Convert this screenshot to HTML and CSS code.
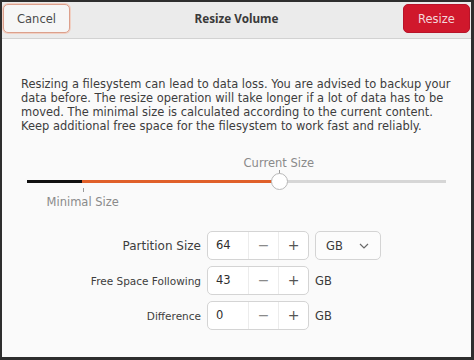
FILE: index.html
```html
<!DOCTYPE html>
<html lang="en">
<head>
<meta charset="utf-8">
<title>Resize Volume</title>
<link rel="stylesheet" href="styles.css">
</head>
<body>
<div class="window">
  <header class="headerbar">
    <button class="btn btn-cancel">Cancel</button>
    <div class="title">Resize Volume</div>
    <button class="btn btn-resize">Resize</button>
  </header>
  <main class="content">
    <p class="info">Resizing a filesystem can lead to data loss. You are advised to backup your<br>data before. The resize operation will take longer if a lot of data has to be<br>moved. The minimal size is calculated according to the current content.<br>Keep additional free space for the filesystem to work fast and reliably.</p>
    <div class="slider">
      <div class="slider-top">
        <span class="mark-label" style="left: 60.1%">Current Size</span>
      </div>
      <div class="track">
        <div class="seg seg-min" style="width: 13.2%"></div>
        <div class="seg seg-fill" style="width: 46.9%"></div>
        <div class="seg seg-rest"></div>
        <span class="tick tick-up" style="left: 60.1%"></span>
        <span class="tick tick-down" style="left: 13.3%"></span>
        <span class="knob" style="left: 60.1%"></span>
      </div>
      <div class="slider-bottom">
        <span class="mark-label" style="left: 13.3%">Minimal Size</span>
      </div>
    </div>
    <div class="form">
      <label class="lbl lbl-big">Partition Size</label>
      <div class="spin">
        <span class="spin-value">64</span>
        <span class="spin-btn minus">−</span>
        <span class="spin-btn plus">+</span>
      </div>
      <div class="dropdown">
        <span>GB</span>
        <svg class="chev" width="10" height="6" viewBox="0 0 10 6"><path d="M1 1 L5 5 L9 1" fill="none" stroke="#6a6a6a" stroke-width="1.2"/></svg>
      </div>

      <label class="lbl">Free Space Following</label>
      <div class="spin">
        <span class="spin-value">43</span>
        <span class="spin-btn minus">−</span>
        <span class="spin-btn plus">+</span>
      </div>
      <span class="unit">GB</span>

      <label class="lbl">Difference</label>
      <div class="spin">
        <span class="spin-value">0</span>
        <span class="spin-btn minus">−</span>
        <span class="spin-btn plus">+</span>
      </div>
      <span class="unit">GB</span>
    </div>
  </main>
</div>
</body>
</html>
```

FILE: styles.css
```css
* { box-sizing: border-box; }
html, body { margin: 0; height: 100%; }
body {
  background: #2e2e2e;
  font-family: "DejaVu Sans", "Noto Sans", sans-serif;
  color: #3d3d3d;
  padding: 2px 3px 3px 2px;
}
.window {
  background: #fafafa;
  height: 355px;
  width: 469px;
  display: flex;
  flex-direction: column;
}
.headerbar {
  height: 37px;
  background: #ebebeb;
  border-bottom: 1px solid #d2d2d2;
  display: flex;
  align-items: flex-start;
  justify-content: space-between;
  padding: 2px 1px 0 1px;
}
.btn {
  font-family: inherit;
  font-size: 11.5px;
  height: 29px;
  width: 67px;
  border-radius: 5px;
  padding: 0;
  cursor: pointer;
}
.btn-cancel {
  background: #f6f6f6;
  color: #4a4a4a;
  border: 1px solid #dca08c;
  box-shadow: 0 0 0 1px #f0d0c4;
}
.btn-resize {
  background: #d0182c;
  color: #f3d7da;
  border: 1px solid #b8142a;
}
.title {
  font-family: "Noto Sans", "DejaVu Sans", sans-serif;
  font-weight: bold;
  font-size: 11.7px;
  color: #3a3a3a;
  line-height: 29px;
}
.content {
  padding: 0 0 0 19px;
}
.info {
  margin: 38px 0 0 0;
  font-size: 11.45px;
  line-height: 14px;
  color: #3d3d3d;
  white-space: nowrap;
}
.slider {
  margin: 23px 0 0 6px;
  width: 419px;
}
.slider-top, .slider-bottom {
  position: relative;
  height: 14px;
}
.mark-label {
  position: absolute;
  transform: translateX(-50%);
  font-size: 11.5px;
  color: #8a8a8a;
  white-space: nowrap;
  line-height: 14px;
  top: 0;
}
.slider-top { margin-bottom: 10px; }
.slider-bottom { margin-top: 12px; }
.track {
  position: relative;
  height: 3px;
  display: flex;
}
.seg { height: 3px; }
.seg-min { background: #111; }
.seg-fill { background: #e0602a; }
.seg-rest { flex: 1; background: #d6d6d6; }
.tick {
  position: absolute;
  width: 1px;
  height: 4px;
  background: #9a9a9a;
}
.tick-up { top: -10px; }
.tick-down { top: 8px; }
.knob {
  position: absolute;
  top: -7px;
  width: 17px;
  height: 17px;
  margin-left: -8px;
  border-radius: 50%;
  background: #fff;
  border: 1px solid #b8b8b8;
}
.form {
  margin-top: 22px;
  display: grid;
  grid-template-columns: 180px auto auto;
  column-gap: 6px;
  row-gap: 6px;
  justify-content: start;
  align-items: center;
}
.lbl {
  text-align: right;
  font-size: 10.5px;
  color: #3d3d3d;
}
.lbl-big { font-size: 12px; }
.spin {
  display: flex;
  height: 29px;
  width: 102px;
  background: #fff;
  border: 1px solid #d4d4d4;
  border-radius: 5px;
}
.spin-value {
  width: 40px;
  padding-left: 8px;
  font-size: 11.5px;
  line-height: 27px;
  color: #2e2e2e;
}
.spin-btn {
  flex: 1;
  text-align: center;
  border-left: 1px solid #ececec;
  font-size: 14px;
  line-height: 27px;
}
.minus { color: #8a8a8a; }
.plus { color: #555; }
.dropdown {
  height: 29px;
  width: 66px;
  border: 1px solid #d4d4d4;
  border-radius: 5px;
  background: #fcfcfc;
  display: flex;
  align-items: center;
  justify-content: space-between;
  padding: 0 11px 0 10px;
  font-size: 11.5px;
  color: #3a3a3a;
}
.chev { display: block; }
.unit {
  font-size: 11.5px;
  color: #3a3a3a;
}
```
